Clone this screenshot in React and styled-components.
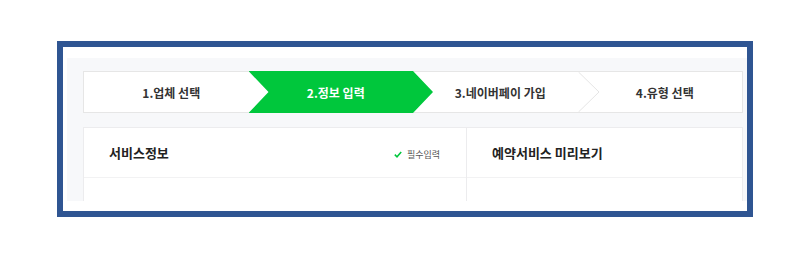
import React from "react";
import styled, { createGlobalStyle } from "styled-components";

const GlobalStyle = createGlobalStyle`
  * { box-sizing: border-box; }
  body {
    margin: 0;
    background: #ffffff;
    font-family: "Noto Sans CJK KR", "Noto Sans", sans-serif;
  }
`;

const STEPS = ["1.업체 선택", "2.정보 입력", "3.네이버페이 가입", "4.유형 선택"];
const ACTIVE = 1;

function App() {
  return (
    <>
      <GlobalStyle />
      <Page>
        <Frame>
          <Panel>
            <StepBar>
              {STEPS.map((label, i) => (
                <Step key={label} active={i === ACTIVE}>
                  <StepLabel active={i === ACTIVE}>{label}</StepLabel>
                  {i < STEPS.length - 1 && i !== ACTIVE && i + 1 !== ACTIVE && (
                    <Chevron viewBox="0 0 22 42" preserveAspectRatio="none">
                      <path d="M0.5 0 L21 21 L0.5 42" fill="none" stroke="#e4e4e4" strokeWidth="1" />
                    </Chevron>
                  )}
                </Step>
              ))}
            </StepBar>

            <Card>
              <Section>
                <SectionHeader>
                  <SectionTitle>서비스정보</SectionTitle>
                  <Required>
                    <svg width="8" height="7" viewBox="0 0 8 7">
                      <path d="M0.8 3.6 L3 5.8 L7.2 1" fill="none" stroke="#00c73c" strokeWidth="1.5" />
                    </svg>
                    필수입력
                  </Required>
                </SectionHeader>
                <SectionBody />
              </Section>
              <Section divider>
                <SectionHeader>
                  <SectionTitle>예약서비스 미리보기</SectionTitle>
                </SectionHeader>
                <SectionBody />
              </Section>
            </Card>
          </Panel>
        </Frame>
      </Page>
    </>
  );
}

const Page = styled.div`
  padding: 41px 47px 49px 57px;
`;

const Frame = styled.div`
  height: 176px;
  border: 6px solid #2f5592;
  background: #ffffff;
  padding: 11px 0 10px 4px;
`;

const Panel = styled.div`
  height: 100%;
  overflow: hidden;
  background: #f7f8fa;
  padding: 13px 4px 0 16px;
  display: flex;
  flex-direction: column;
  gap: 14px;
`;

const StepBar = styled.div`
  display: flex;
  height: 42px;
  flex: 0 0 auto;
  border: 1px solid #e6e6e6;
  background: #ffffff;
`;

const Step = styled.div`
  position: relative;
  flex: 1 1 0;
  display: flex;
  align-items: center;
  justify-content: center;
  padding-left: 10px;

  &::before {
    content: "";
    display: ${(p) => (p.active ? "block" : "none")};
    position: absolute;
    top: -1px;
    bottom: -1px;
    left: 0;
    right: -20px;
    z-index: 1;
    background: #00c73c;
    clip-path: polygon(
      0 0,
      calc(100% - 20px) 0,
      100% 50%,
      calc(100% - 20px) 100%,
      0 100%,
      20px 50%
    );
  }
`;

const StepLabel = styled.span`
  position: relative;
  z-index: 2;
  font-size: 12px;
  font-weight: 700;
  color: ${(p) => (p.active ? "#ffffff" : "#333333")};
`;

const Chevron = styled.svg`
  position: absolute;
  top: 0;
  right: -22px;
  width: 22px;
  height: 100%;
  z-index: 1;
`;

const Card = styled.div`
  flex: 1 0 auto;
  display: grid;
  grid-template-columns: 382px 1fr;
  border: 1px solid #ececee;
  background: #ffffff;
`;

const Section = styled.div`
  display: flex;
  flex-direction: column;
  border-left: ${(p) => (p.divider ? "1px solid #ececee" : "none")};
`;

const SectionHeader = styled.div`
  height: 50px;
  display: flex;
  align-items: center;
  justify-content: space-between;
  padding: 0 26px 0 25px;
  border-bottom: 1px solid #f2f2f3;
`;

const SectionTitle = styled.h3`
  margin: 0;
  font-size: 13px;
  font-weight: 700;
  color: #222222;
`;

const Required = styled.span`
  display: flex;
  align-items: center;
  gap: 5px;
  font-size: 9px;
  color: #555555;
  margin-top: 3px;
`;

const SectionBody = styled.div`
  flex: 1;
  min-height: 60px;
`;

export default App;
